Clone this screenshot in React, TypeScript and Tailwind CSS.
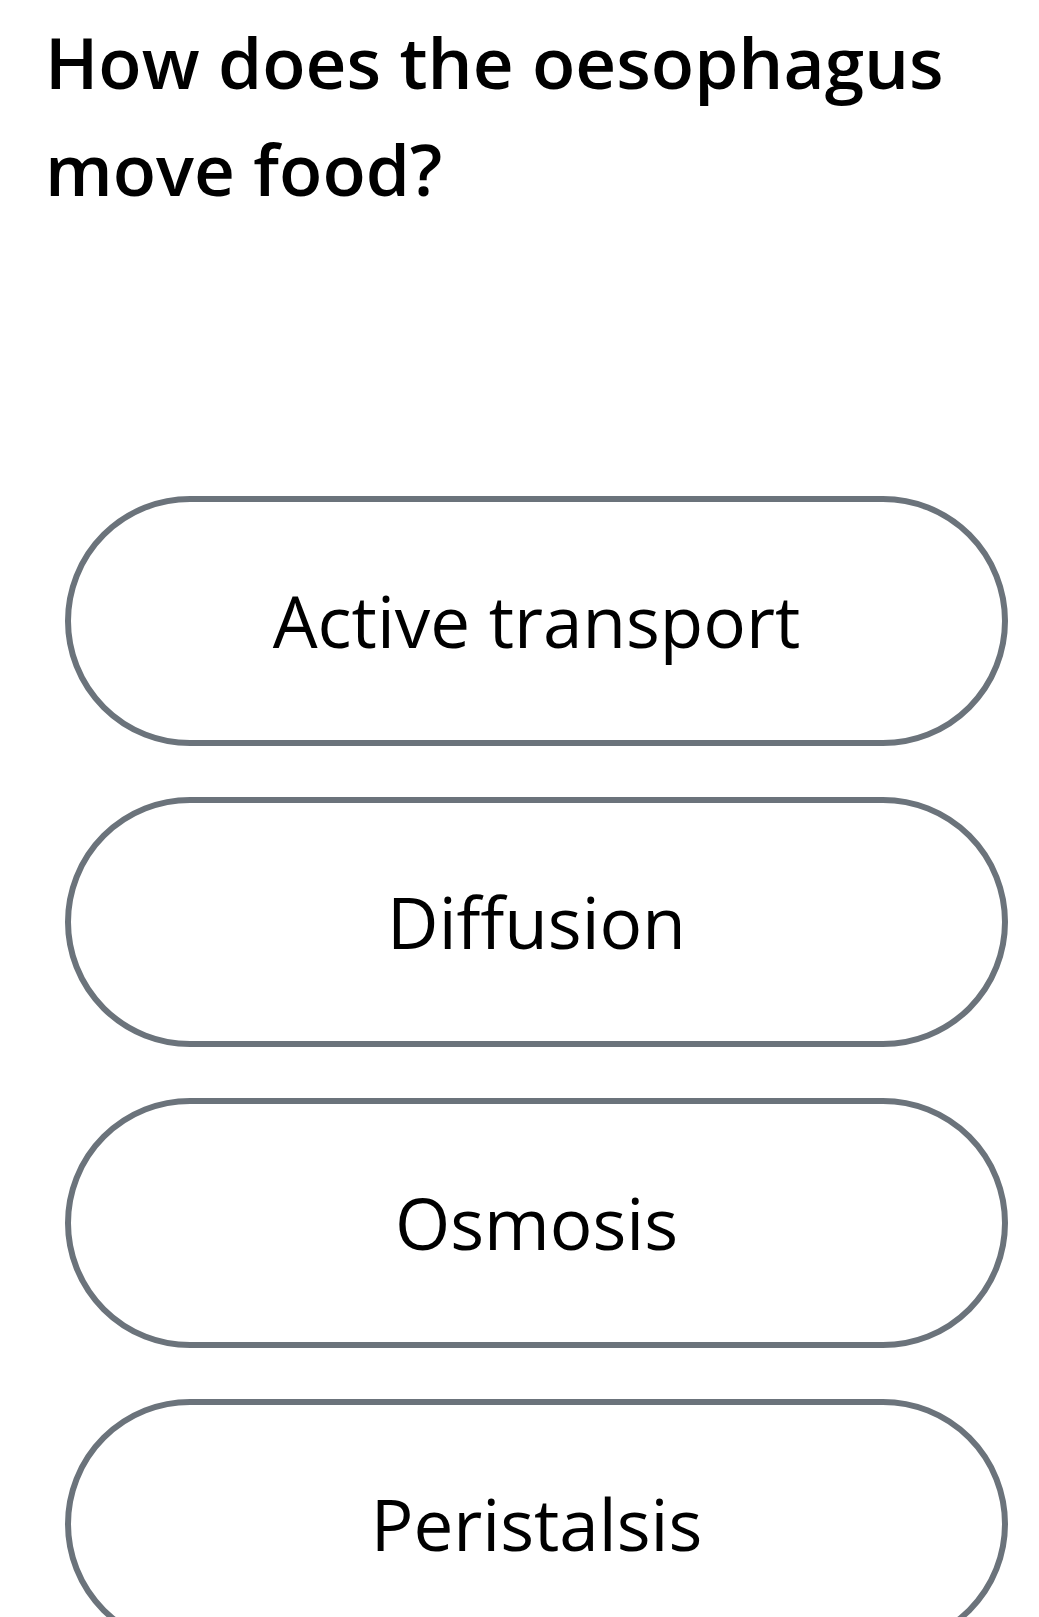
const options = ['Active transport', 'Diffusion', 'Osmosis', 'Peristalsis'];

export default function App() {
  return (
    <div className="min-h-screen bg-white text-black" style={{ fontFamily: '"Open Sans", sans-serif' }}>
      <div className="pl-[45px] pr-[30px] pt-[8px]">
        <h1 className="text-[71px] font-semibold leading-[107px]">
          How does the oesophagus move food?
        </h1>
      </div>
      <div className="mt-[274px] flex flex-col gap-[51px] pl-[65px] pr-[31px]">
        {options.map((opt) => (
          <button
            key={opt}
            className="flex h-[250px] w-full items-center justify-center rounded-full border-[6px] border-[#6b737b] bg-white text-[71px] text-black"
          >
            {opt}
          </button>
        ))}
      </div>
    </div>
  );
}
